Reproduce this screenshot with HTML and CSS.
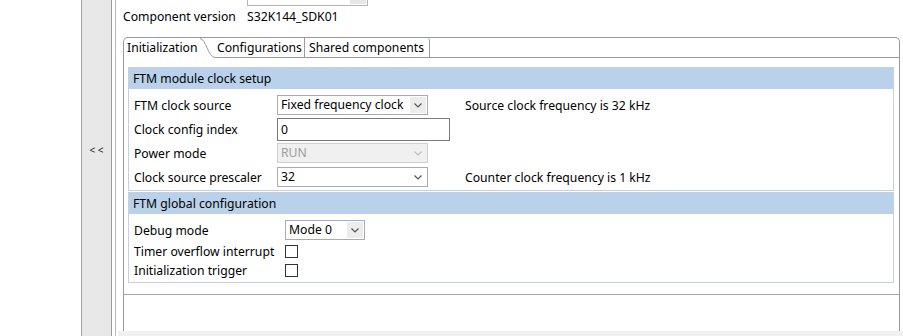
FILE: index.html
```html
<!DOCTYPE html>
<html>
<head>
<meta charset="utf-8">
<link rel="stylesheet" href="styles.css">
</head>
<body>
<div class="app">
  <div class="blank"></div>
  <div class="sidebar"><span class="collapse">&lt; &lt;</span></div>
  <div class="gap"></div>
  <div class="main">
    <div class="top-clip">
      <div class="top-combo"><span class="top-combo-btn"></span></div>
    </div>
    <div class="version-row">
      <span class="version-label">Component version</span>
      <span class="version-val">S32K144_SDK01</span>
    </div>
    <div class="folder">
      <div class="tabstrip">
        <div class="tab tab-selected">Initialization</div>
        <svg class="tab-curve" width="15" height="20" viewBox="0 0 15 20"><path d="M0 0.5 C6 0.5 8 19.5 15 19.5" fill="none" stroke="#9a9a9a" stroke-width="1"/></svg>
        <div class="tab tab-config">Configurations</div>
        <div class="tab tab-shared">Shared components</div>
        <div class="tab-fill"></div>
      </div>
      <div class="folder-body">
        <section class="group">
          <div class="group-head">FTM module clock setup</div>
          <div class="grid grid-clock">
            <span class="label">FTM clock source</span>
            <div class="combo combo-wide"><span class="combo-text">Fixed frequency clock</span><span class="chev chev-hover"><svg width="8" height="5" viewBox="0 0 8 5"><path d="M0.5 0.5 L4 4 L7.5 0.5" fill="none" stroke="#555" stroke-width="1.2"/></svg></span></div>
            <span class="info">Source clock frequency is 32 kHz</span>

            <span class="label">Clock config index</span>
            <div class="textbox">0</div>
            <span></span>

            <span class="label">Power mode</span>
            <div class="combo combo-wide combo-disabled"><span class="combo-text">RUN</span><span class="chev"><svg width="8" height="5" viewBox="0 0 8 5"><path d="M0.5 0.5 L4 4 L7.5 0.5" fill="none" stroke="#bdbdbd" stroke-width="1.2"/></svg></span></div>
            <span></span>

            <span class="label">Clock source prescaler</span>
            <div class="combo combo-wide"><span class="combo-text">32</span><span class="chev"><svg width="8" height="5" viewBox="0 0 8 5"><path d="M0.5 0.5 L4 4 L7.5 0.5" fill="none" stroke="#555" stroke-width="1.2"/></svg></span></div>
            <span class="info">Counter clock frequency is 1 kHz</span>
          </div>
        </section>
        <section class="group group-global">
          <div class="group-head">FTM global configuration</div>
          <div class="grid grid-global">
            <span class="label">Debug mode</span>
            <div class="combo combo-small"><span class="combo-text">Mode 0</span><span class="chev chev-hover"><svg width="8" height="5" viewBox="0 0 8 5"><path d="M0.5 0.5 L4 4 L7.5 0.5" fill="none" stroke="#555" stroke-width="1.2"/></svg></span></div>

            <span class="label">Timer overflow interrupt</span>
            <span class="check"></span>

            <span class="label">Initialization trigger</span>
            <span class="check"></span>
          </div>
        </section>
      </div>
      <div class="folder-rest"></div>
    </div>
    <div class="hscroll"></div>
  </div>
</div>
</body>
</html>
```
FILE: styles.css
```css
html, body {
  margin: 0;
  padding: 0;
  background: #ffffff;
}
body {
  width: 903px;
  height: 336px;
  overflow: hidden;
  font-family: "Noto Sans", "Open Sans", sans-serif;
  font-size: 12.2px;
  color: #000;
}
.app {
  display: flex;
  height: 336px;
}
.blank {
  width: 81px;
  flex: none;
}
.sidebar {
  width: 31px;
  flex: none;
  background: #e8e8e8;
  border-left: 1px solid #a3a3a3;
  border-right: 1px solid #9c9c9c;
  display: flex;
  flex-direction: column;
  align-items: center;
  padding-top: 143px;
  box-sizing: border-box;
}
.collapse {
  font-size: 10px;
  line-height: 14px;
  color: #222;
}
.gap {
  width: 4px;
  flex: none;
  border-right: 1px solid #b9b9b9;
  box-sizing: border-box;
}
.main {
  flex: 1;
  display: flex;
  flex-direction: column;
  padding: 0 3px 0 7px;
  min-width: 0;
}
.top-clip {
  height: 6px;
  overflow: hidden;
  display: flex;
  align-items: flex-end;
  padding-left: 124px;
}
.top-combo {
  width: 121px;
  height: 22px;
  box-sizing: border-box;
  border: 1px solid #b4b4b4;
  display: flex;
  justify-content: flex-end;
  padding: 1px;
  flex: none;
}
.top-combo-btn {
  width: 16px;
  background: #e6e6e6;
}
.version-row {
  height: 22px;
  line-height: 22px;
  display: flex;
  margin-bottom: 9px;
}
.version-label {
  width: 124px;
  flex: none;
}
.folder {
  flex: 1;
  display: flex;
  flex-direction: column;
  border: 1px solid #9a9a9a;
  border-bottom: none;
  border-radius: 5px 5px 0 0;
}
.tabstrip {
  display: flex;
  height: 20px;
  flex: none;
}
.tab {
  box-sizing: border-box;
  height: 20px;
  line-height: 19px;
  border-bottom: 1px solid #9a9a9a;
  white-space: nowrap;
  flex: none;
}
.tab-selected {
  width: 76px;
  padding-left: 3px;
  border-bottom: none;
  border-top-left-radius: 4px;
}
.tab-curve {
  flex: none;
  display: block;
}
.tab-config {
  width: 90px;
  padding-left: 2px;
  border-right: 1px solid #9a9a9a;
}
.tab-shared {
  width: 125px;
  padding-left: 4px;
  border-right: 1px solid #9a9a9a;
  border-top-right-radius: 3px;
}
.tab-fill {
  flex: 1;
  border-bottom: 1px solid #9a9a9a;
}
.folder-body {
  padding: 9px 5px 11px 4px;
  border-bottom: 1px solid #a8a8a8;
  flex: none;
}
.folder-rest {
  flex: 1;
}
.hscroll {
  height: 5px;
  background: #f0f0f0;
  margin-left: -5px;
  margin-right: -3px;
  flex: none;
}
.group {
  border: 1px solid #c6d0dd;
  padding-bottom: 1px;
}
.group-global {
  margin-top: 1px;
  padding-bottom: 2px;
}
.group-head {
  height: 21px;
  line-height: 21px;
  background: #b9d1ea;
  padding-left: 4px;
}
.grid {
  display: grid;
  padding: 4px 5px 0 5px;
  align-items: center;
}
.grid-clock {
  grid-template-columns: 143px 188px 1fr;
  grid-auto-rows: 24px;
}
.grid-global {
  grid-template-columns: 151px 1fr;
  grid-template-rows: 24px 19px 19px;
}
.label {
  white-space: nowrap;
}
.info {
  white-space: nowrap;
}
.combo {
  box-sizing: border-box;
  height: 20px;
  border: 1px solid #ababab;
  background: #fff;
  display: flex;
  align-items: center;
  justify-content: space-between;
  padding: 1px 1px 1px 3px;
}
.combo-wide {
  width: 151px;
}
.combo-small {
  width: 80px;
}
.combo-text {
  white-space: nowrap;
  line-height: 16px;
}
.chev {
  width: 16px;
  height: 16px;
  display: flex;
  align-items: center;
  justify-content: center;
}
.chev svg {
  display: block;
}
.chev-hover {
  background: #ececec;
}
.combo-disabled {
  background: #f0f0f0;
  border-color: #cfcfcf;
  color: #9d9d9d;
}
.textbox {
  box-sizing: border-box;
  width: 173px;
  height: 23px;
  border: 1px solid #7a7a7a;
  padding-left: 3px;
  line-height: 21px;
}
.check {
  width: 13px;
  height: 13px;
  box-sizing: border-box;
  border: 1px solid #333;
  background: #fff;
}
```
